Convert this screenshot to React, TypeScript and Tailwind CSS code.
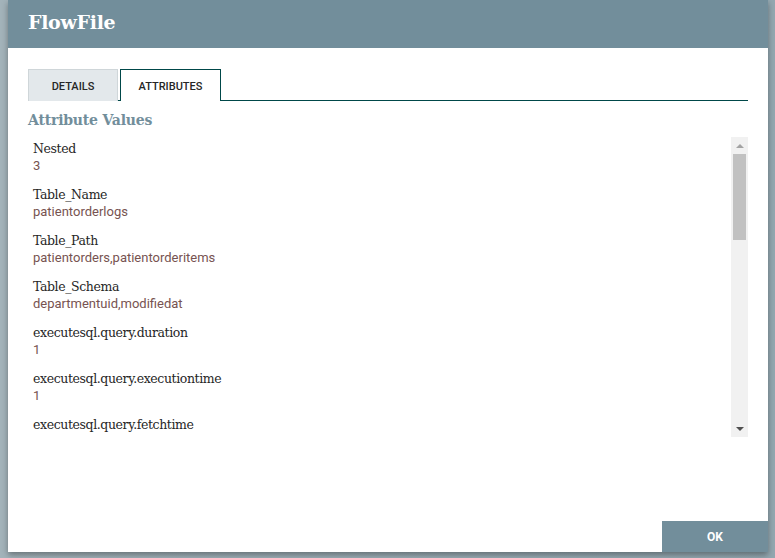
import React from 'react'

const attributes = [
  { name: 'Nested', value: '3' },
  { name: 'Table_Name', value: 'patientorderlogs' },
  { name: 'Table_Path', value: 'patientorders,patientorderitems' },
  { name: 'Table_Schema', value: 'departmentuid,modifiedat' },
  { name: 'executesql.query.duration', value: '1' },
  { name: 'executesql.query.executiontime', value: '1' },
  { name: 'executesql.query.fetchtime', value: '' },
]

const slab = { fontFamily: '"DejaVu Serif", "Liberation Serif", serif' }

export default function App() {
  return (
    <div className="w-[775px] h-[558px] overflow-hidden bg-gradient-to-r from-[#a3b3ba] to-[#93a7b0] pl-2" style={{ fontFamily: 'Roboto, "Noto Sans", sans-serif' }}>
      <div className="w-[760px] h-[552px] bg-white flex flex-col shadow-[0_3px_6px_rgba(0,0,0,0.35)]">
        {/* header */}
        <div className="h-12 bg-[#728e9b] flex items-center pl-5 pb-1">
          <h1 className="text-white text-[19px] font-bold tracking-[-0.3px]" style={slab}>FlowFile</h1>
        </div>

        <div className="flex-1 flex flex-col px-5 pt-[21px]">
          {/* tabs */}
          <div className="flex gap-[2px] border-b border-[#004849] h-8">
            <div className="w-[90px] h-8 pt-[3px] bg-[#e3e8eb] border border-b-0 border-[#cfd6d9] flex items-center justify-center text-[11px] font-medium text-[#262626] uppercase">
              Details
            </div>
            <div className="w-[101px] h-8 pt-[3px] bg-white border border-b-0 border-[#004849] -mb-px flex items-center justify-center text-[11px] font-medium text-[#262626] uppercase">
              Attributes
            </div>
          </div>

          <h2 className="mt-[9px] text-[14px] font-bold text-[#728e9b] leading-5 tracking-[-0.2px]" style={slab}>Attribute Values</h2>

          {/* list */}
          <div className="mt-[7px] h-[300px] flex">
            <div className="flex-1 overflow-hidden pt-[3px] pl-[5px]">
              {attributes.map((a) => (
                <div key={a.name} className="mb-3">
                  <div className="text-[12.5px] leading-[17px] text-[#262626] tracking-[-0.4px]" style={slab}>{a.name}</div>
                  {a.value && <div className="text-[13px] leading-[17px] text-[#775351]">{a.value}</div>}
                </div>
              ))}
            </div>
            <div className="w-[17px] bg-[#f1f1f1] flex flex-col items-center">
              <div className="h-[17px] flex items-center justify-center">
                <div className="w-0 h-0 border-l-[4px] border-r-[4px] border-b-[4px] border-l-transparent border-r-transparent border-b-[#a3a3a3]" />
              </div>
              <div className="w-[13px] h-[86px] bg-[#c1c1c1]" />
              <div className="flex-1" />
              <div className="h-[17px] flex items-center justify-center">
                <div className="w-0 h-0 border-l-[4px] border-r-[4px] border-t-[4px] border-l-transparent border-r-transparent border-t-[#505050]" />
              </div>
            </div>
          </div>

          <div className="flex-1" />
        </div>

        {/* footer */}
        <div className="flex justify-end">
          <button className="w-[106px] h-[31px] bg-[#728e9b] text-white text-[12px] font-bold">OK</button>
        </div>
      </div>
    </div>
  )
}
